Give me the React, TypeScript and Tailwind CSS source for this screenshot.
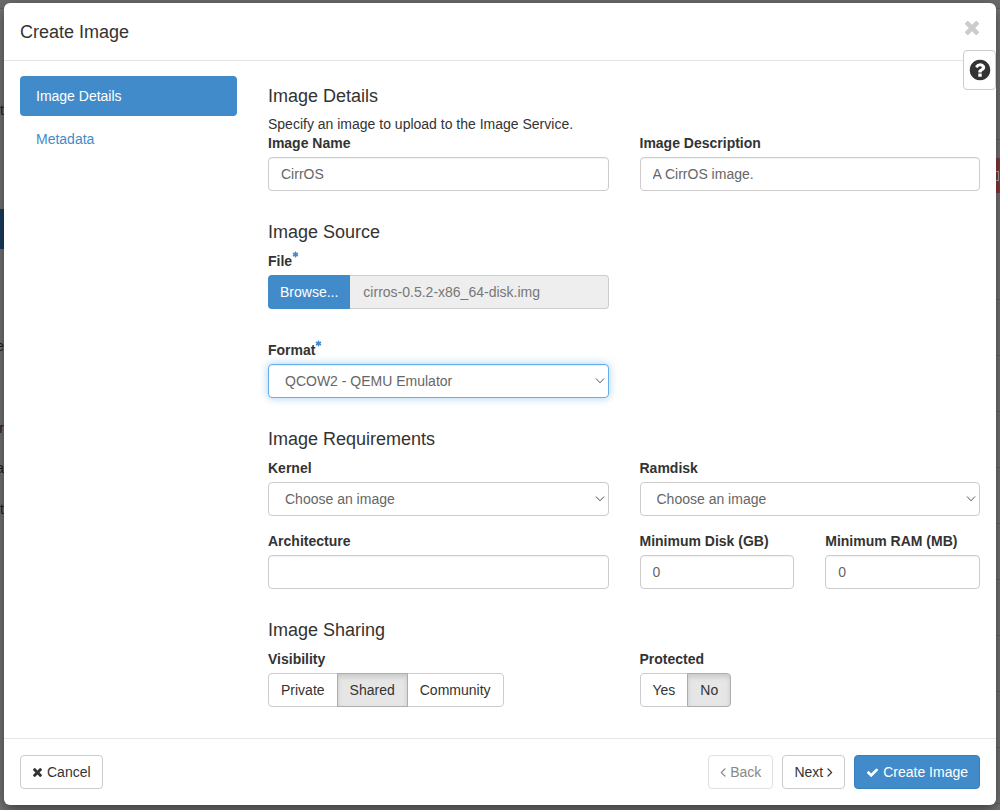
import React, { useState } from 'react';

const ICONS = {
  times:
    'M1490 1322q0 40-28 68l-136 136q-28 28-68 28t-68-28l-294-294-294 294q-28 28-68 28t-68-28l-136-136q-28-28-28-68t28-68l294-294-294-294q-28-28-28-68t28-68l136-136q28-28 68-28t68 28l294 294 294-294q28-28 68-28t68 28l136 136q28 28 28 68t-28 68l-294 294 294 294q28 28 28 68z',
  check:
    'M1671 566q0 40-28 68l-724 724-136 136q-28 28-68 28t-68-28l-136-136-362-362q-28-28-28-68t28-68l136-136q28-28 68-28t68 28l294 295 656-657q28-28 68-28t68 28l136 136q28 28 28 68z',
  question:
    'M1024 1376v-192q0-14-9-23t-23-9h-192q-14 0-23 9t-9 23v192q0 14 9 23t23 9h192q14 0 23-9t9-23zm256-672q0-88-55.5-163t-138.5-116-170-41q-243 0-371 213-15 24 8 42l132 100q7 6 19 6 16 0 25-12 53-68 86-92 34-24 86-24 48 0 85.5 26t37.5 59q0 38-20 61t-68 45q-63 28-115.5 86.5t-52.5 125.5v36q0 14 9 23t23 9h192q14 0 23-9t9-23q0-19 21.5-49.5t54.5-49.5q32-18 49-28.5t46-35 44.5-48 28-60.5 12.5-81zm384 192q0 209-103 385.5t-279.5 279.5-385.5 103-385.5-103-279.5-279.5-103-385.5 103-385.5 279.5-279.5 385.5-103 385.5 103 279.5 279.5 103 385.5z',
  asterisk:
    'M1546 1050q46 26 59.5 77.5t-12.5 97.5l-64 110q-26 46-77.5 59.5t-97.5-12.5l-266-153v307q0 52-38 90t-90 38h-128q-52 0-90-38t-38-90v-307l-266 153q-46 26-97.5 12.5t-77.5-59.5l-64-110q-26-46-12.5-97.5t59.5-77.5l266-154-266-154q-46-26-59.5-77.5t12.5-97.5l64-110q26-46 77.5-59.5t97.5 12.5l266 153v-307q0-52 38-90t90-38h128q52 0 90 38t38 90v307l266-153q46-26 97.5-12.5t77.5 59.5l64 110q26 46 12.5 97.5t-59.5 77.5l-266 154z',
  left: 'M1203 544q0 13-10 23l-393 393 393 393q10 10 10 23t-10 23l-50 50q-10 10-23 10t-23-10l-466-466q-10-10-10-23t10-23l466-466q10-10 23-10t23 10l50 50q10 10 10 23z',
  right:
    'M1171 960q0 13-10 23l-466 466q-10 10-23 10t-23-10l-50-50q-10-10-10-23t10-23l393-393-393-393q-10-10-10-23t10-23l50-50q10-10 23-10t23 10l466 466q10 10 10 23z',
};

interface IconProps {
  name: keyof typeof ICONS;
  className?: string;
  viewBox?: string;
}

const Icon: React.FC<IconProps> = ({ name, className, viewBox = '0 0 1792 1792' }) => (
  <svg aria-hidden="true" viewBox={viewBox} fill="currentColor" className={className}>
    <path d={ICONS[name]} />
  </svg>
);

const labelClass = 'mb-1 flex h-5 items-center font-bold';
const inputClass =
  'block h-[34px] w-full rounded border border-[#ccc] bg-white px-3 text-[#666] shadow-[inset_0_1px_1px_rgba(0,0,0,0.05)] outline-none';
const buttonClass = 'flex h-[34px] items-center gap-1 rounded border px-[11px]';

interface FieldProps {
  id: string;
  label: string;
  required?: boolean;
  children: React.ReactNode;
}

const Field: React.FC<FieldProps> = ({ id, label, required, children }) => (
  <div className="min-w-0">
    <label htmlFor={id} className={labelClass}>
      {label}
      {required && <Icon name="asterisk" className="size-[7px] self-start text-[#428bca]" />}
    </label>
    {children}
  </div>
);

interface SelectProps {
  id: string;
  options: string[];
  active?: boolean;
}

const Select: React.FC<SelectProps> = ({ id, options, active }) => (
  <div className="relative">
    <select
      id={id}
      className={`block h-[34px] w-full appearance-none rounded border bg-white px-4 text-[#666] outline-none ${
        active
          ? 'border-[#66afe9] shadow-[inset_0_1px_1px_rgba(0,0,0,0.075),0_0_8px_rgba(102,175,233,0.6)]'
          : 'border-[#ccc]'
      }`}
    >
      {options.map((o) => (
        <option key={o}>{o}</option>
      ))}
    </select>
    <svg
      aria-hidden="true"
      viewBox="0 0 10 6"
      fill="none"
      stroke="#555"
      className="pointer-events-none absolute top-[14px] right-1 h-[6px] w-[10px]"
    >
      <path d="M1 .5l4 4.3L9 .5" />
    </svg>
  </div>
);

interface ToggleGroupProps {
  label: string;
  options: string[];
  initial: string;
}

const ToggleGroup: React.FC<ToggleGroupProps> = ({ label, options, initial }) => {
  const [value, setValue] = useState(initial);

  return (
    <fieldset className="min-w-0">
      <legend className={labelClass}>{label}</legend>
      <div className="flex">
        {options.map((o) => (
          <label
            key={o}
            className={`-ml-px flex h-[34px] cursor-pointer items-center border px-3 first:ml-0 first:rounded-l last:rounded-r ${
              value === o
                ? 'z-10 border-[#adadad] bg-[#e6e6e6] shadow-[inset_0_3px_5px_rgba(0,0,0,0.125)]'
                : 'border-[#ccc] bg-white'
            }`}
          >
            <input
              type="radio"
              name={label}
              value={o}
              checked={value === o}
              onChange={() => setValue(o)}
              className="sr-only"
            />
            {o}
          </label>
        ))}
      </div>
    </fieldset>
  );
};

interface SectionProps {
  title: string;
  children: React.ReactNode;
}

const Section: React.FC<SectionProps> = ({ title, children }) => (
  <section>
    <h2 className="mb-[9px] text-lg leading-5">{title}</h2>
    {children}
  </section>
);

const rows = Array.from({ length: 10 }, (_, i) => i);

// The dimmed page that shows around the dialog
const Backdrop: React.FC = () => (
  <div aria-hidden="true" className="absolute inset-0 overflow-hidden bg-[#757575] text-[#222]">
    <div className="h-[9px] border-b border-[#606060] bg-[#6c6c6c]" />
    <div className="absolute inset-y-0 left-0 w-1">
      <span className="absolute top-[101px] right-0">ut</span>
      <div className="absolute top-[209px] right-0 h-10 w-60 bg-[#1b3f60]" />
      <span className="absolute top-[337px] right-0">e</span>
      <span className="absolute top-[419px] right-0">r</span>
      <span className="absolute top-[459px] right-0">a</span>
      <span className="absolute top-[500px] right-0">t</span>
    </div>
    <div className="absolute top-[139px] right-0 w-24 border-t border-[#666]" />
    <div className="absolute top-[158px] right-0 flex h-[35px] w-1 items-center bg-[#8a3b39]">
      <div className="h-[10px] w-[3px] border border-l-0 border-[#aaa]" />
    </div>
    <div className="absolute top-[244px] right-0 w-24">
      {rows.map((r) => (
        <div key={r} className="h-14 border-b border-[#666]" />
      ))}
    </div>
  </div>
);

const App: React.FC = () => {
  const [name, setName] = useState('CirrOS');
  const [description, setDescription] = useState('A CirrOS image.');

  return (
    <div className="relative min-h-screen px-1 pt-[3px] pb-[5px] font-['Helvetica_Neue','Liberation_Sans',Arial,sans-serif] text-[14px] leading-[18px] text-[#333]">
      <Backdrop />
      <div
        role="dialog"
        aria-labelledby="dialog-title"
        className="relative rounded-md bg-white shadow-[0_5px_15px_rgba(0,0,0,0.5)]"
      >
        <header className="flex h-[58px] items-center justify-between border-b border-[#e5e5e5] px-4">
          <h1 id="dialog-title" className="text-lg">
            Create Image
          </h1>
          <button type="button" aria-label="Close" className="mb-2 text-[#ccc]">
            <Icon name="times" viewBox="302 366 1188 1188" className="mr-px size-[14px]" />
          </button>
        </header>
        <button
          type="button"
          aria-label="Help"
          className="absolute top-[47px] right-0 flex h-10 w-[33px] items-center justify-center rounded border border-[#ccc] bg-white"
        >
          <Icon name="question" className="size-6 shrink-0" />
        </button>

        <div className="flex gap-[31px] px-4 pt-[15px] pb-[31px]">
          <nav className="w-[217px] shrink-0">
            <a href="#details" className="block rounded bg-[#428bca] px-4 py-[11px] text-white">
              Image Details
            </a>
            <a href="#metadata" className="mt-[3px] block px-4 py-[11px] text-[#428bca]">
              Metadata
            </a>
          </nav>

          <form id="image-form" className="flex min-w-0 flex-1 flex-col gap-[31px] pt-[10px]">
            <Section title="Image Details">
              <p>Specify an image to upload to the Image Service.</p>
              <div className="grid grid-cols-2 gap-[31px]">
                <Field id="name" label="Image Name">
                  <input id="name" value={name} onChange={(e) => setName(e.target.value)} className={inputClass} />
                </Field>
                <Field id="description" label="Image Description">
                  <input
                    id="description"
                    value={description}
                    onChange={(e) => setDescription(e.target.value)}
                    className={inputClass}
                  />
                </Field>
              </div>
            </Section>

            <Section title="Image Source">
              <div className="grid grid-cols-2 gap-x-[31px]">
                <div className="flex flex-col gap-[31px]">
                  <Field id="file" label="File" required>
                    <div className="flex">
                      <button type="button" className="h-[34px] rounded-l bg-[#428bca] px-3 text-white">
                        Browse...
                      </button>
                      <input
                        id="file"
                        readOnly
                        value="cirros-0.5.2-x86_64-disk.img"
                        className="h-[34px] min-w-0 flex-1 rounded-r border border-l-0 border-[#ccc] bg-[#eee] px-[13px] text-[#777] outline-none"
                      />
                    </div>
                  </Field>
                  <Field id="format" label="Format" required>
                    <Select id="format" options={['QCOW2 - QEMU Emulator', 'ISO - Optical Disk Image', 'Raw']} active />
                  </Field>
                </div>
              </div>
            </Section>

            <Section title="Image Requirements">
              <div className="grid grid-cols-2 gap-x-[31px] gap-y-[15px]">
                <Field id="kernel" label="Kernel">
                  <Select id="kernel" options={['Choose an image']} />
                </Field>
                <Field id="ramdisk" label="Ramdisk">
                  <Select id="ramdisk" options={['Choose an image']} />
                </Field>
                <Field id="architecture" label="Architecture">
                  <input id="architecture" className={inputClass} />
                </Field>
                <div className="grid grid-cols-2 gap-[31px]">
                  <Field id="min-disk" label="Minimum Disk (GB)">
                    <input id="min-disk" inputMode="numeric" defaultValue="0" className={inputClass} />
                  </Field>
                  <Field id="min-ram" label="Minimum RAM (MB)">
                    <input id="min-ram" inputMode="numeric" defaultValue="0" className={inputClass} />
                  </Field>
                </div>
              </div>
            </Section>

            <Section title="Image Sharing">
              <div className="grid grid-cols-2 gap-[31px]">
                <ToggleGroup label="Visibility" options={['Private', 'Shared', 'Community']} initial="Shared" />
                <ToggleGroup label="Protected" options={['Yes', 'No']} initial="No" />
              </div>
            </Section>
          </form>
        </div>

        <footer className="flex items-center justify-between border-t border-[#e5e5e5] p-4">
          <button type="button" className={`${buttonClass} border-[#ccc]`}>
            <Icon name="times" viewBox="302 366 1188 1188" className="mx-px size-[9px]" />
            Cancel
          </button>
          <div className="flex gap-[9px]">
            <button type="button" disabled className={`${buttonClass} border-[#e0e0e0] text-[#888]`}>
              <Icon name="left" viewBox="550 480 700 960" className="h-[9px] w-[6px]" />
              Back
            </button>
            <button type="button" className={`${buttonClass} border-[#ccc]`}>
              Next
              <Icon name="right" viewBox="550 480 700 960" className="h-[9px] w-[6px]" />
            </button>
            <button
              type="submit"
              form="image-form"
              className={`${buttonClass} border-[#357ebd] bg-[#428bca] text-white`}
            >
              <Icon name="check" className="size-[13px]" />
              Create Image
            </button>
          </div>
        </footer>
      </div>
    </div>
  );
};

export default App;
